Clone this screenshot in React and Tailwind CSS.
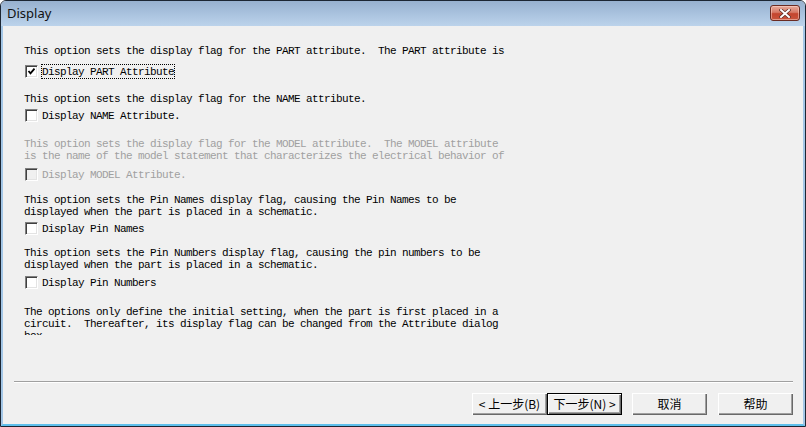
import React from "react";

const MONO = "font-['Liberation_Mono',monospace] text-[11px] tracking-[-0.6px] leading-[12px]";

function CheckBox({ checked, disabled }) {
  return (
    <span
      className={`ml-[1px] w-[13px] h-[13px] shrink-0 border border-t-[#7f7f7f] border-l-[#7f7f7f] border-b-white border-r-white shadow-[inset_1px_1px_0_#404040,inset_-1px_-1px_0_#e3e3e3] flex items-center justify-center ${
        disabled ? "bg-[#f0f0f0]" : "bg-white"
      }`}
    >
      {checked && (
        <svg width="9" height="9" viewBox="0 0 9 9">
          <polyline points="1.5,4 3.5,6.4 7.5,1.6" fill="none" stroke="#000" strokeWidth="1.8" />
        </svg>
      )}
    </span>
  );
}

function Option({ label, checked, disabled, focused, className }) {
  return (
    <div className={`flex items-center h-[15px] ${className}`}>
      <CheckBox checked={checked} disabled={disabled} />
      <span
        className={`ml-[3px] h-[15px] flex items-center border ${
          focused ? "border-dotted border-black" : "border-transparent"
        } ${MONO} ${disabled ? "text-[#a0a0a0]" : "text-black"} whitespace-pre`}
      >
        {label}
      </span>
    </div>
  );
}

function Para({ lines, disabled, className }) {
  return (
    <div className={`${MONO} whitespace-pre ${disabled ? "text-[#a0a0a0]" : "text-black"} ${className}`}>
      {lines.map((l, i) => (
        <div key={i} className="h-[12px]">
          {l}
        </div>
      ))}
    </div>
  );
}

function WinButton({ children, primary }) {
  return (
    <button
      className={`w-[75px] h-[22px] flex items-center justify-center bg-[#f0f0f0] text-black text-[12px] font-['Noto_Sans_CJK_SC','Noto_Sans',sans-serif] leading-none ${
        primary
          ? "border border-black shadow-[inset_1px_1px_0_#fff,inset_-1px_-1px_0_#696969,inset_-2px_-2px_0_#a0a0a0]"
          : "shadow-[inset_1px_1px_0_#fff,inset_-1px_-1px_0_#696969,inset_-2px_-2px_0_#a0a0a0]"
      }`}
    >
      {children}
    </button>
  );
}

export default function App() {
  return (
    <div className="w-[806px] h-[427px] flex flex-col overflow-hidden rounded-t-[6px] border border-[#1c2633] bg-[#f0f0f0]">
      {/* Title bar */}
      <div className="h-[25px] shrink-0 flex items-start justify-between pl-[6px] pr-[5px] bg-[linear-gradient(to_bottom,#97b1cf,#a9c2de_50%,#bcd3eb)]">
        <span className="mt-[4px] text-[13px] leading-[16px] text-[#111] font-['Noto_Sans',sans-serif]">
          Display
        </span>
        <div className="mt-[4px] w-[30px] h-[16px] rounded-[3px] border border-[#6a2b22] bg-[linear-gradient(to_bottom,#e8ab9c,#d77a66_45%,#c4452e_55%,#c9553d)] flex items-center justify-center shadow-[inset_0_0_0_1px_rgba(255,220,210,0.5)]">
          <svg width="12" height="9" viewBox="0 0 12 9">
            <path d="M2 1 L10 8 M10 1 L2 8" stroke="#5a2a22" strokeWidth="3.4" strokeLinecap="square" />
            <path d="M2 1 L10 8 M10 1 L2 8" stroke="#fff" strokeWidth="2" strokeLinecap="square" />
          </svg>
        </div>
      </div>

      {/* Body */}
      <div className="flex-1 flex flex-col border-x-2 border-x-[#a3c6e6] border-b-2 border-b-[#5fc0ec]">
        <div className="h-[309px] shrink-0 overflow-hidden pl-[21px] pt-[19px]">
          <Para lines={["This option sets the display flag for the PART attribute.  The PART attribute is"]} />
          <Option className="mt-[7px]" label="Display PART Attribute" checked focused />

          <Para className="mt-[14px]" lines={["This option sets the display flag for the NAME attribute."]} />
          <Option className="mt-[3px]" label="Display NAME Attribute." />

          <Para
            className="mt-[15px]"
            disabled
            lines={[
              "This option sets the display flag for the MODEL attribute.  The MODEL attribute",
              "is the name of the model statement that characterizes the electrical behavior of",
            ]}
          />
          <Option className="mt-[5px]" label="Display MODEL Attribute." disabled />

          <Para
            className="mt-[12px]"
            lines={[
              "This option sets the Pin Names display flag, causing the Pin Names to be",
              "displayed when the part is placed in a schematic.",
            ]}
          />
          <Option className="mt-[3px]" label="Display Pin Names" />

          <Para
            className="mt-[11px]"
            lines={[
              "This option sets the Pin Numbers display flag, causing the pin numbers to be",
              "displayed when the part is placed in a schematic.",
            ]}
          />
          <Option className="mt-[4px]" label="Display Pin Numbers" />

          <Para
            className="mt-[16px]"
            lines={[
              "The options only define the initial setting, when the part is first placed in a",
              "circuit.  Thereafter, its display flag can be changed from the Attribute dialog",
              "box.",
            ]}
          />
        </div>

        <div className="mt-[46px] ml-[11px] mr-[10px] h-[2px] border-t border-t-[#a0a0a0] border-b border-b-white" />

        <div className="mt-[10px] flex justify-end pr-[10px]">
          <WinButton>&lt; 上一步(B)</WinButton>
          <WinButton primary>下一步(N) &gt;</WinButton>
          <div className="w-[10px]" />
          <WinButton>取消</WinButton>
          <div className="w-[11px]" />
          <WinButton>帮助</WinButton>
        </div>
      </div>
    </div>
  );
}
